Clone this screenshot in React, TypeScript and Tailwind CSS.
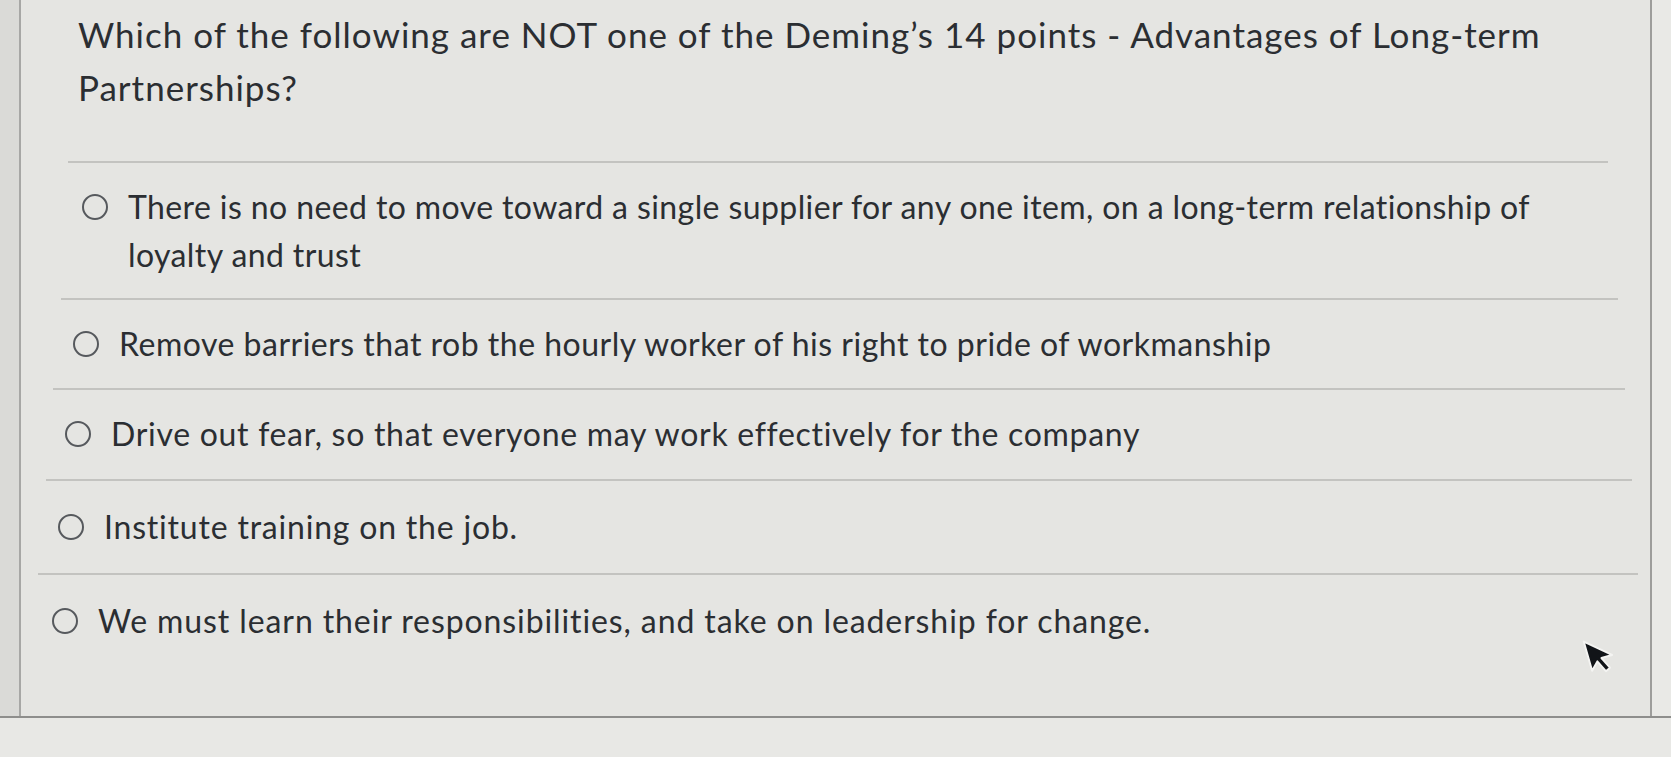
import { Fragment } from 'react';

interface Option {
    text: string;
    rowClass: string;
    lineClass: string;
}

// rows drift outwards slightly as they go down the page
const options: Option[] = [
    {
        text: 'There is no need to move toward a single supplier for any one item, on a long-term relationship of loyalty and trust',
        rowClass: 'pl-[61px] pr-[60px] pt-[20px] pb-[19px] tracking-[0.4px]',
        lineClass: 'ml-[47px] mr-[42px]',
    },
    {
        text: 'Remove barriers that rob the hourly worker of his right to pride of workmanship',
        rowClass: 'pl-[52px] pr-[50px] py-[20px] tracking-[0.5px]',
        lineClass: 'ml-[40px] mr-[32px]',
    },
    {
        text: 'Drive out fear, so that everyone may work effectively for the company',
        rowClass: 'pl-[44px] pr-[40px] pt-[20px] pb-[21px] tracking-[0.7px]',
        lineClass: 'ml-[32px] mr-[25px]',
    },
    {
        text: 'Institute training on the job.',
        rowClass: 'pl-[37px] pr-[30px] py-[22px] tracking-[0.8px]',
        lineClass: 'ml-[25px] mr-[18px]',
    },
    {
        text: 'We must learn their responsibilities, and take on leadership for change.',
        rowClass: 'pl-[31px] pr-[20px] pt-[22px] pb-[20px] tracking-[0.9px]',
        lineClass: 'ml-[17px] mr-[12px]',
    },
];

function Radio() {
    return (
        <span className="mt-[11px] h-[26px] w-[26px] shrink-0 rounded-full border-2 border-[#56595d]" />
    );
}

function Cursor() {
    return (
        <svg
            className="absolute left-[1584px] top-[634px] rotate-[-16deg]"
            width="36"
            height="42"
            viewBox="0 0 26 30"
        >
            <path
                d="M3 2 L3 24 L8.5 18.5 L12.5 27 L16 25.4 L12 17 L20 17 Z"
                fill="#111418"
                stroke="#f4f4f2"
                strokeWidth="1.4"
                strokeLinejoin="round"
            />
        </svg>
    );
}

export default function App() {
    return (
        <div className="relative h-[757px] w-full overflow-hidden bg-[#e5e5e2] font-['Lato','Open_Sans',sans-serif] text-[#2b2e32]">
            <div className="flex h-[718px] border-b-2 border-[#8e8e8c]">
                {/* left gutter */}
                <div className="w-[21px] shrink-0 border-r-2 border-[#a7a7a5] bg-[#dadad7]" />

                {/* question card */}
                <div className="flex flex-1 flex-col">
                    <h1 className="pl-[57px] pr-[50px] pt-[8px] text-[35px] font-normal leading-[53px] tracking-[1px]">
                        Which of the following are NOT one of the Deming’s 14
                        points - Advantages of Long-term Partnerships?
                    </h1>

                    <div className="mt-[47px]">
                        {options.map((opt) => (
                            <Fragment key={opt.text}>
                                <div
                                    className={`h-[2px] bg-[#c3c3c0] ${opt.lineClass}`}
                                />
                                <label
                                    className={`flex gap-[20px] text-[32px] leading-[48px] ${opt.rowClass}`}
                                >
                                    <Radio />
                                    <span>{opt.text}</span>
                                </label>
                            </Fragment>
                        ))}
                    </div>
                </div>

                {/* right gutter */}
                <div className="w-[21px] shrink-0 border-l-2 border-[#9d9d9b] bg-[#e9e9e6]" />
            </div>
            <div className="h-[39px] bg-[#e8e8e5]" />

            <Cursor />
        </div>
    );
}
